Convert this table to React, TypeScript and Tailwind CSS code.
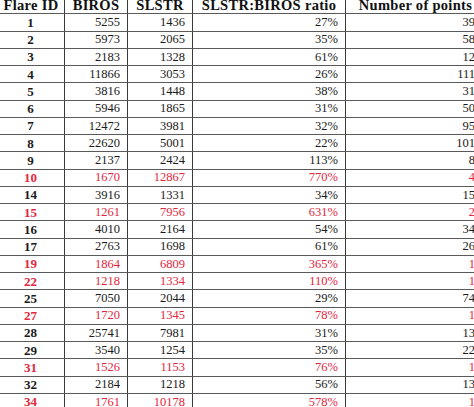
const rows: [string, number, number, string, number, boolean][] = [
  ["1", 5255, 1436, "27%", 39, false],
  ["2", 5973, 2065, "35%", 58, false],
  ["3", 2183, 1328, "61%", 12, false],
  ["4", 11866, 3053, "26%", 111, false],
  ["5", 3816, 1448, "38%", 31, false],
  ["6", 5946, 1865, "31%", 50, false],
  ["7", 12472, 3981, "32%", 95, false],
  ["8", 22620, 5001, "22%", 101, false],
  ["9", 2137, 2424, "113%", 8, false],
  ["10", 1670, 12867, "770%", 4, true],
  ["14", 3916, 1331, "34%", 15, false],
  ["15", 1261, 7956, "631%", 2, true],
  ["16", 4010, 2164, "54%", 34, false],
  ["17", 2763, 1698, "61%", 26, false],
  ["19", 1864, 6809, "365%", 1, true],
  ["22", 1218, 1334, "110%", 1, true],
  ["25", 7050, 2044, "29%", 74, false],
  ["27", 1720, 1345, "78%", 1, true],
  ["28", 25741, 7981, "31%", 13, false],
  ["29", 3540, 1254, "35%", 22, false],
  ["31", 1526, 1153, "76%", 1, true],
  ["32", 2184, 1218, "56%", 13, false],
  ["34", 1761, 10178, "578%", 1, true],
];

const grid = "grid grid-cols-[70px_63px_65px_153px_134px] h-[17.25px] border-b-[1.5px] border-[#5a5a5a]";
const cell = "flex items-center border-r-[1.5px] border-[#3a3a3a] leading-none";

export default function App() {
  return (
    <div
      className="w-[474px] h-[407px] overflow-hidden bg-white text-[12.5px] text-[#1a1a1a]"
      style={{ fontFamily: '"Liberation Serif", "DejaVu Serif", serif' }}
    >
      <div className="-mt-[3px] -ml-[5px] w-[490px]">
        <div className={`${grid} font-bold text-[14.5px] tracking-[0.3px] text-[#111]`}>
          <div className={`${cell} justify-center pl-[3px]`}>Flare ID</div>
          <div className={`${cell} justify-center`}>BIROS</div>
          <div className={`${cell} justify-center`}>SLSTR</div>
          <div className={`${cell} justify-center`}>SLSTR:BIROS ratio</div>
          <div className={`${cell} justify-center whitespace-nowrap pl-[6px]`}>Number of points</div>
        </div>
        {rows.map(([id, biros, slstr, ratio, pts, red]) => (
          <div key={id} className={`${grid} ${red ? "text-[#e3263d]" : ""}`}>
            <div className={`${cell} justify-center font-bold text-[13px] pl-[2px]`}>{id}</div>
            <div className={`${cell} justify-end pr-[7px]`}>{biros}</div>
            <div className={`${cell} justify-end pr-[7px]`}>{slstr}</div>
            <div className={`${cell} justify-end pr-[7px]`}>{ratio}</div>
            <div className={`${cell} justify-end pr-[4px]`}>{pts}</div>
          </div>
        ))}
      </div>
    </div>
  );
}
